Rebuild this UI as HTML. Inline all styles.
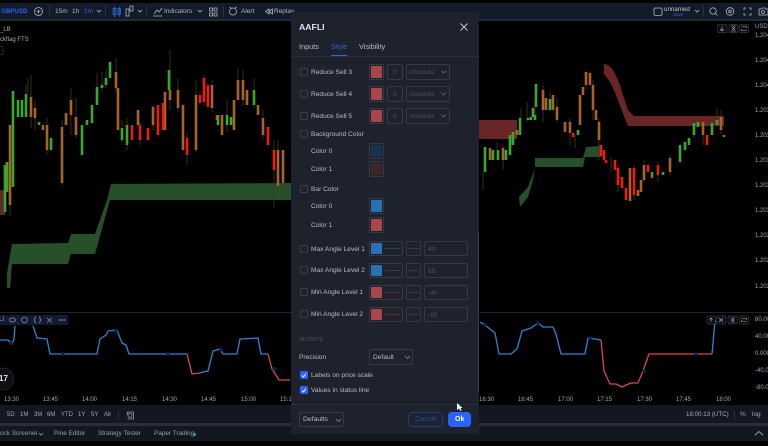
<!DOCTYPE html>
<html><head><meta charset="utf-8"><style>
html,body{margin:0;padding:0;background:#000;width:768px;height:446px;overflow:hidden}
#r{position:relative;width:768px;height:446px;overflow:hidden;background:#000;font-family:"Liberation Sans",sans-serif;color:#d1d4dc;filter:blur(.3px)}
.t{position:absolute;white-space:nowrap;font-size:6.6px;line-height:8px;color:#c3c6ce;transform:translateY(1px)}
.a{position:absolute}
.ax{color:#a3a6af;font-size:6px}
.d{position:absolute;left:291px;top:12px;width:188px;height:422px;background:#1e222d;border-radius:2px}
.l{position:absolute;white-space:nowrap;font-size:6.6px;line-height:8px;color:#b8bbc3;transform:translateY(1px)}
.cb{position:absolute;width:8px;height:8px;box-sizing:border-box;border:1px solid #3a3e49;border-radius:1.5px}
.cb.on{background:#2962ff;border-color:#2962ff}
.b{position:absolute;border:1px solid #363a45;border-radius:2px;box-sizing:border-box}
.s{position:absolute;border-radius:1px}
.dim{color:#4c505b}
.tb{color:#b2b5be;font-size:6.5px}
</style></head><body><div id="r">

<div class="a" style="left:0;top:3px;width:768px;height:16px;background:#131a2a"></div>
<div class="a" style="left:0;top:19px;width:768px;height:2px;background:#262a35"></div>
<div class="a" style="left:0;top:405px;width:768px;height:18px;background:#131722"></div>
<div class="a" style="left:0;top:423px;width:768px;height:3px;background:#2a2e39"></div>
<div class="a" style="left:0;top:426px;width:768px;height:15px;background:#131722"></div>
<div class="a" style="left:0;top:312px;width:768px;height:1px;background:#1e222d"></div>

<svg class="a" style="left:0;top:0" width="768" height="446" viewBox="0 0 768 446" fill="none">
<!-- bands -->
<path d="M7 273L12 244L68 243L71 234L95 234L107 200L111 184L291 183L291 200L110 200L95 254L71 254L68 264L12 264L10 288L7 288Z" fill="#25502a"/>
<path d="M519 197L528 187L535 168L535 158L583 158L586 147L601 146L601 157L585 157L583 167L535 167L533 180L528 197L520 207Z" fill="#25502a"/>
<path d="M479 120L517 120L517 139L479 139Z" fill="#6a2626"/>
<path d="M0 190L5 190L5 215L0 215Z" fill="#5a2a26"/>
<path d="M604 64C612 64 618 78 622 92L628 110L634 116L724 116L724 126L628 126C622 112 616 93 610 82L604 74Z" fill="#6a2626"/>
<!-- wicks -->
<path d="M10 195V216M26 84V117M28 78V94M31 75V128M35 100V130M47 118V155M62 120V185M71 88V135M76 98V138M97 73V105M102 72V92M106 68V88M116 58V92M122 120V142M127 118V150M140 122V145M153 105V130M170 50V110M178 78V112M187 133V165M196 80V152M204 75V106M212 80V112M227 100V132M238 68V100M243 70V105M254 78V108M263 110V140M274 140V208M278 140V190" stroke="#3f3320" stroke-width=".9"/>
<path d="M483 172V190M497 142V160M503 145V170M521 108V120M527 102V122M535 100V120M543 85V122M550 92V112M557 98V122M570 118V145M575 135V148M586 70V90M593 80V120M599 118V160M611 158V172M618 165V192M634 165V200M644 160V182M658 162V182M670 155V175M694 120V138M703 120V145M717 108V125M721 110V135" stroke="#3f3320" stroke-width=".9"/>
<!-- green bodies -->
<path d="M13 91V187M7 162V192M5 165V212M18 100V117M22 100V117M26 94V117M39 122V125M51 138V150M82 125V155M87 120V125M92 105V123M97 87V105M102 85V88M106 78V85M110 62V78M122 128V140M127 125V145M169 70V90M218 115V125M227 115V125M231 117V125M254 90V105" stroke="#39a82c" stroke-width="2.6"/>
<path d="M485 147V172M493 150V160M498 150V160M506 150V160M510 135V155M513 132V145M520 118V135M528 118V120M531 117V120M535 115V120M533 108V117M536 84V107M550 99V110M578 130V135M680 145V162M685 142V150M689 138V145M694 123V135M698 122V127M712 123V135M717 120V125M724 135V137M652 172V176M663 172V175" stroke="#39a82c" stroke-width="2.6"/>
<!-- orange bodies -->
<path d="M10 125V205M31 97V117M35 108V118M43 125V130M47 125V150M62 127V183M66 113V125M71 100V115M76 117V135M116 72V88M118 88V130M138 110V125M153 107V125M165 92V130M170 90V100M178 90V108M183 105V150M196 95V150M212 85V108M217 115V120M222 115V135M234 100V130M238 80V100M243 80V100M247 90V105M258 105V115M263 118V135M278 150V186M283 150V183" stroke="#a8622c" stroke-width="2.6"/>
<path d="M490 148V160M503 148V160M517 130V135M543 90V110M546 98V110M553 95V110M557 107V120M565 122V132M570 122V133M580 95V125M583 87V95M586 72V85M590 73V85M593 85V110M596 110V120M599 122V140M630 168V201M638 190V196M641 180V192M644 165V180M652 175V178M670 158V172M703 122V135M721 117V130" stroke="#a8622c" stroke-width="2.6"/>
<!-- red bodies -->
<path d="M132 125V140M140 125V140M148 128V140M158 105V135M163 103V130M187 138V155M200 95V103M204 78V102M208 85V107M268 127V145M274 150V170" stroke="#ee1c10" stroke-width="2.6"/>
<path d="M573 133V137M601 145V156M604 150V160M606 160V163M615 160V170M618 168V185M622 177V188M626 188V200M634 168V195M648 165V172M658 165V175M707 135V145" stroke="#ee1c10" stroke-width="2.6"/>
<!-- oscillator -->
<g stroke-width="1.3" stroke-linejoin="round">
<path d="M0 340L8 340L12 344L14 339L15 326M33 326L37 338L47 339L50 354L97 354L100 339L106 335L108 331L117 330L122 343L126 345L129 354L187 354" stroke="#2a86d4"/>
<path d="M187 354L192 374L200 373" stroke="#d9474f"/>
<path d="M200 373L203 372L208 371L213 351L220 349L223 354L237 354L240 339L258 338L261 354L268 354" stroke="#2a86d4"/>
<path d="M268 354L272 369L279 380L290 380" stroke="#d9474f"/>
<path d="M480 322L485 325L495 333L499 354L511 354L517 349L522 331L531 328L538 323L543 327L553 327L556 334L561 354L585 354L588 338L601 340" stroke="#2a86d4"/>
<path d="M601 340L604 371L610 384L616 384L622 387L626 385L631 383L638 383L643 371L649 354L712 354" stroke="#d9474f"/>
<path d="M712 354L715 321L718 321" stroke="#2a86d4"/>
</g>
<g fill="#101c4a" stroke="#1c2e6a" stroke-width=".6">
<circle cx="11" cy="343" r="1.5"/><circle cx="63" cy="354" r="1.5"/><circle cx="116" cy="331" r="1.5"/><circle cx="168" cy="354" r="1.5"/><circle cx="221" cy="350" r="1.5"/><circle cx="274" cy="369" r="1.5"/>
<circle cx="485" cy="325" r="1.5"/><circle cx="538" cy="323" r="1.5"/><circle cx="590" cy="338" r="1.5"/><circle cx="644" cy="371" r="1.5"/><circle cx="696" cy="354" r="1.5"/>
</g>
<!-- toolbar icons -->
<g stroke="#b2b5be" stroke-width=".8">
<circle cx="38.500" cy="11.500" r="4"/><path d="M36.500 11.500H40.500M38.500 9.500V13.500"/>
<path d="M49.500 6V17M105.500 6V17M146.500 6V17M223.500 6V17M703.500 6V17" stroke="#363a45"/>
<path d="M97 10L99 12L101 10M138 10L140 12L142 10M198 10L200 12L202 10M695 10L697 12L699 10"/>
<path d="M126 9H129V16H126ZM130 6H133V11H130Z"/>
<path d="M153 16H162M154 14L157 10L159 12L162 8"/>
<path d="M209.500 8h3v3h-3zM214 8h3v3h-3zM209.500 13h3v3h-3zM214 13h3v3h-3z"/>
<circle cx="233" cy="11.500" r="3.500"/><path d="M229.500 8L231 7M235 7L236.500 8"/>
<path d="M269 9L265.500 11.500L269 14ZM272.500 9L269 11.500L272.500 14Z"/>
<rect x="654" y="8" width="8" height="7.500" rx="1.500"/>
<circle cx="713" cy="11" r="3.200"/><path d="M715.500 13.500L717.500 15.500"/>
<circle cx="730" cy="11.500" r="3.800"/><circle cx="730" cy="11.500" r="1.300"/>
<path d="M744 10V8H746M749 8H751V10M751 13V15H749M746 15H744V13"/>
<path d="M759 9H761L762 8H765L766 9H768V15H759Z"/><circle cx="763" cy="12" r="1.500"/>
</g>
<g stroke="#2a6bdc" stroke-width=".8"><path d="M113 8.500H116V14.500H113ZM118 8.500H120.500V14.500H118ZM114.500 6.500V17M119.300 6.500V17" /></g>
<!-- range icon, chevrons -->
<g stroke="#9a9da6" stroke-width=".8">
<path d="M126 414H127.500V412H133.500V419H127.500" /><circle cx="130" cy="415.500" r="2"/>
<path d="M118.500 411V420M734.500 411V420" stroke="#363a45"/>
<path d="M39 433L41 435L43 433"/>
<path d="M755 435L759 431.500L763 435" stroke-width="1"/>
</g>
<!-- small buttons -->
<g stroke="#363a45" stroke-width=".7" fill="#0b0d13">
<rect x="717.500" y="24.500" width="9.500" height="8" rx="1.500"/><rect x="729" y="24.500" width="9" height="8" rx="1.500"/><rect x="739.500" y="24.500" width="9" height="8" rx="1.500"/>
<rect x="707" y="316" width="8" height="8" rx="1.500"/><rect x="716.500" y="316" width="9" height="8" rx="1.500"/><rect x="728" y="316" width="9.500" height="8" rx="1.500"/><rect x="739.500" y="316" width="9" height="8" rx="1.500"/>
</g>
<g stroke="#b2b5be" stroke-width=".6">
<path d="M722 26V31M720 29L722 31L724 29M731 26H736M731 31H736M732 27L733.500 28.500L735 27M732 30L733.500 28.500L735 30M741.500 26.500H746.500V28M746.500 30.500H741.500V29"/>
<path d="M711 318V322M709.500 319.500L711 318L712.500 319.500M719 318L723 322M723 318L719 322M730.500 318H735M730.500 322H735M731.500 319L732.800 320L734 319M731.500 321L732.800 320L734 321M741.500 318.500H746.500V320M746.500 321.500H741.500V320"/>
</g>
<!-- osc toolbar + logo -->
<rect x="-2" y="315" width="70" height="10" rx="2" fill="#111a33"/>
<g stroke="#9a9da6" stroke-width=".7">
<ellipse cx="12.500" cy="320" rx="3" ry="2"/><circle cx="24.500" cy="320" r="2.800"/>
<path d="M36 317Q34.500 317 35 319L34 320L35 321Q34.500 323 36 323M39 317Q40.500 317 40 319L41 320L40 321Q40.500 323 39 323M47 318L52 322.500M52 318L47 322.500"/>
<path d="M59 320H65" stroke-dasharray="1.500 .8" stroke-width="1.300"/>
</g>
<circle cx="3" cy="379" r="11" fill="#0f1014" stroke="#26282e" stroke-width=".7"/>
<rect x="-3" y="46.500" width="6" height="8" rx="1" stroke="#363a45" stroke-width=".7"/>
</svg>

<div class="t" style="left:1px;top:7px;color:#2a62e0;font-weight:bold;font-size:6.2px">GBPUSD</div>
<div class="t tb" style="left:55px;top:7px">15m</div>
<div class="t tb" style="left:72px;top:7px">1h</div>
<div class="t tb" style="left:84px;top:7px;color:#2a62e0">1m</div>
<div class="t tb" style="left:164px;top:7px">Indicators</div>
<div class="t tb" style="left:241px;top:7px">Alert</div>
<div class="t tb" style="left:274px;top:7px">Replay</div>
<div class="t" style="left:664px;top:5px;color:#c3c6ce;font-size:6.200px">unnamed</div>
<div class="t" style="left:673px;top:10px;color:#2a62e0;font-size:4.500px">Save</div>

<div class="t" style="left:0;top:25px;font-size:6px;color:#a9acb5">_LB</div>
<div class="t" style="left:0;top:35px;font-size:6px;color:#a9acb5">ckflag FTS</div>

<div class="t ax" style="left:755px;top:22px">USD ▾</div>
<div class="t ax" style="left:755px;top:31px">1.204</div>
<div class="t ax" style="left:755px;top:56px">1.204</div>
<div class="t ax" style="left:755px;top:81px">1.204</div>
<div class="t ax" style="left:755px;top:106px">1.203</div>
<div class="t ax" style="left:755px;top:131px">1.203</div>
<div class="t ax" style="left:755px;top:156px">1.203</div>
<div class="t ax" style="left:755px;top:181px">1.203</div>
<div class="t ax" style="left:755px;top:206px">1.203</div>
<div class="t ax" style="left:755px;top:231px">1.202</div>
<div class="t ax" style="left:755px;top:256px">1.202</div>
<div class="t ax" style="left:755px;top:282px">1.202</div>
<div class="t ax" style="left:755px;top:315px">80.00</div>
<div class="t ax" style="left:755px;top:332px">40.00</div>
<div class="t ax" style="left:755px;top:349px">0.000</div>
<div class="t ax" style="left:755px;top:366px">-40.0</div>
<div class="t ax" style="left:755px;top:383px">-80.0</div>

<div class="t ax" style="left:4px;top:395px">13:30</div>
<div class="t ax" style="left:43px;top:395px">13:45</div>
<div class="t ax" style="left:82px;top:395px">14:00</div>
<div class="t ax" style="left:122px;top:395px">14:15</div>
<div class="t ax" style="left:162px;top:395px">14:30</div>
<div class="t ax" style="left:201px;top:395px">14:45</div>
<div class="t ax" style="left:241px;top:395px">15:00</div>
<div class="t ax" style="left:280px;top:395px">15:15</div>
<div class="t ax" style="left:479px;top:395px">16:30</div>
<div class="t ax" style="left:518px;top:395px">16:45</div>
<div class="t ax" style="left:558px;top:395px">17:00</div>
<div class="t ax" style="left:597px;top:395px">17:15</div>
<div class="t ax" style="left:637px;top:395px">17:30</div>
<div class="t ax" style="left:676px;top:395px">17:45</div>
<div class="t ax" style="left:716px;top:395px">18:00</div>

<div class="t" style="left:-1px;top:315px;font-size:6px;color:#a9acb5">LI</div>
<div class="t" style="left:-1px;top:374px;font-weight:bold;font-size:8px;color:#e4e5e8">17</div>

<div class="t ax" style="left:7px;top:410px">5D</div>
<div class="t ax" style="left:20px;top:410px">1M</div>
<div class="t ax" style="left:34px;top:410px">3M</div>
<div class="t ax" style="left:47px;top:410px">6M</div>
<div class="t ax" style="left:61px;top:410px">YTD</div>
<div class="t ax" style="left:78px;top:410px">1Y</div>
<div class="t ax" style="left:91px;top:410px">5Y</div>
<div class="t ax" style="left:104px;top:410px">All</div>
<div class="t ax" style="left:686px;top:410px;font-size:6.2px;color:#a9acb5">18:00:13 (UTC)</div>
<div class="t ax" style="left:740px;top:410px;font-size:6.5px">%</div>
<div class="t ax" style="left:752px;top:410px;font-size:6.5px;color:#a9acb5">log</div>

<div class="t" style="left:0;top:429px;color:#9a9da6;font-size:6.4px">ock Screener</div>
<div class="t" style="left:54px;top:429px;color:#9a9da6;font-size:6.4px">Pine Editor</div>
<div class="t" style="left:98px;top:429px;color:#9a9da6;font-size:6.4px">Strategy Tester</div>
<div class="t" style="left:154px;top:429px;color:#9a9da6;font-size:6.4px">Paper Trading</div>
<div class="a" style="left:193px;top:433px;width:2.500px;height:2.500px;border-radius:50%;background:#22ab5a"></div>

<!-- dialog -->
<div class="d"></div>
<div class="t" style="left:299px;top:21px;font-weight:bold;font-size:8.700px;line-height:10px;color:#e0e3eb">AAFLI</div>
<svg class="a" style="left:460px;top:23px" width="8" height="8" fill="none"><path d="M.5 .5L7.500 7.500M7.500 .5L.5 7.500" stroke="#c3c6ce"/></svg>
<div class="l" style="left:299px;top:42px;font-size:7.300px">Inputs</div>
<div class="l" style="left:331px;top:42px;font-size:7.300px;color:#2f5fd0">Style</div>
<div class="l" style="left:359px;top:42px;font-size:7.300px">Visibility</div>
<div class="a" style="left:331px;top:55px;width:16px;height:1px;background:#2962ff"></div>
<div class="a" style="left:291px;top:56px;width:188px;height:1px;background:#2a2e39"></div>

<!-- Reduce rows -->
<div class="cb" style="left:300px;top:68px"></div><div class="l" style="left:311px;top:68px">Reduce Sell 3</div>
<div class="b" style="left:369px;top:64px;width:15px;height:16px"></div><div class="s" style="left:371px;top:66px;width:11px;height:12px;background:#a8464b"></div>
<div class="b" style="left:387px;top:64px;width:16px;height:16px"></div><div class="l dim" style="left:393px;top:68px">0</div>
<div class="b" style="left:406px;top:64px;width:44px;height:16px"></div><div class="l dim" style="left:409px;top:68px">Absolute</div>

<div class="cb" style="left:300px;top:90px"></div><div class="l" style="left:311px;top:90px">Reduce Sell 4</div>
<div class="b" style="left:369px;top:86px;width:15px;height:16px"></div><div class="s" style="left:371px;top:88px;width:11px;height:12px;background:#a8464b"></div>
<div class="b" style="left:387px;top:86px;width:16px;height:16px"></div><div class="l dim" style="left:393px;top:90px">0</div>
<div class="b" style="left:406px;top:86px;width:44px;height:16px"></div><div class="l dim" style="left:409px;top:90px">Absolute</div>

<div class="cb" style="left:300px;top:112px"></div><div class="l" style="left:311px;top:112px">Reduce Sell 5</div>
<div class="b" style="left:369px;top:108px;width:15px;height:16px"></div><div class="s" style="left:371px;top:110px;width:11px;height:12px;background:#a8464b"></div>
<div class="b" style="left:387px;top:108px;width:16px;height:16px"></div><div class="l dim" style="left:393px;top:112px">0</div>
<div class="b" style="left:406px;top:108px;width:44px;height:16px"></div><div class="l dim" style="left:409px;top:112px">Absolute</div>
<svg class="a" style="left:440px;top:70px" width="8" height="50" fill="none" stroke="#6a6d78" stroke-width=".8"><path d="M1 .5L3.500 3L6 .5M1 22.500L3.500 25L6 22.500M1 44.500L3.500 47L6 44.500"/></svg>

<div class="cb" style="left:300px;top:130px"></div><div class="l" style="left:311px;top:130px">Background Color</div>
<div class="l" style="left:311px;top:147px">Color 0</div>
<div class="b" style="left:369px;top:143px;width:15px;height:16px"></div><div class="s" style="left:371px;top:145px;width:11px;height:12px;background:#1b3150"></div>
<div class="l" style="left:311px;top:165px">Color 1</div>
<div class="b" style="left:369px;top:161px;width:15px;height:16px"></div><div class="s" style="left:371px;top:163px;width:11px;height:12px;background:#3d2529"></div>

<div class="cb" style="left:300px;top:185px"></div><div class="l" style="left:311px;top:185px">Bar Color</div>
<div class="l" style="left:311px;top:202px">Color 0</div>
<div class="b" style="left:369px;top:198px;width:15px;height:16px"></div><div class="s" style="left:371px;top:200px;width:11px;height:12px;background:#2a70b4"></div>
<div class="l" style="left:311px;top:221px">Color 1</div>
<div class="b" style="left:369px;top:217px;width:15px;height:16px"></div><div class="s" style="left:371px;top:219px;width:11px;height:12px;background:#a8464b"></div>

<!-- Angle rows -->
<div class="cb" style="left:300px;top:245px"></div><div class="l" style="left:311px;top:245px">Max Angle Level 1</div>
<div class="b" style="left:369px;top:241px;width:34px;height:15px"></div><div class="s" style="left:371px;top:243px;width:11px;height:11px;background:#2a70b4"></div><div class="a" style="left:385px;top:248px;width:15px;height:1px;background:#1f4568"></div>
<div class="b" style="left:406px;top:241px;width:15px;height:15px"></div><div class="a" style="left:408px;top:248px;width:11px;border-top:1px dotted #4c505b"></div>
<div class="b" style="left:424px;top:241px;width:44px;height:15px"></div><div class="l dim" style="left:428px;top:245px">40</div>

<div class="cb" style="left:300px;top:266px"></div><div class="l" style="left:311px;top:266px">Max Angle Level 2</div>
<div class="b" style="left:369px;top:263px;width:34px;height:15px"></div><div class="s" style="left:371px;top:265px;width:11px;height:11px;background:#2a70b4"></div><div class="a" style="left:385px;top:270px;width:15px;height:1px;background:#1f4568"></div>
<div class="b" style="left:406px;top:263px;width:15px;height:15px"></div><div class="a" style="left:408px;top:270px;width:11px;border-top:1px dotted #4c505b"></div>
<div class="b" style="left:424px;top:263px;width:44px;height:15px"></div><div class="l dim" style="left:428px;top:267px">65</div>

<div class="cb" style="left:300px;top:288px"></div><div class="l" style="left:311px;top:288px">Min Angle Level 1</div>
<div class="b" style="left:369px;top:285px;width:34px;height:15px"></div><div class="s" style="left:371px;top:287px;width:11px;height:11px;background:#a8464b"></div><div class="a" style="left:385px;top:292px;width:15px;height:1px;background:#5a2c32"></div>
<div class="b" style="left:406px;top:285px;width:15px;height:15px"></div><div class="a" style="left:408px;top:292px;width:11px;border-top:1px dotted #4c505b"></div>
<div class="b" style="left:424px;top:285px;width:44px;height:15px"></div><div class="l dim" style="left:428px;top:289px">-40</div>

<div class="cb" style="left:300px;top:310px"></div><div class="l" style="left:311px;top:310px">Min Angle Level 2</div>
<div class="b" style="left:369px;top:307px;width:34px;height:15px"></div><div class="s" style="left:371px;top:309px;width:11px;height:11px;background:#a8464b"></div><div class="a" style="left:385px;top:314px;width:15px;height:1px;background:#5a2c32"></div>
<div class="b" style="left:406px;top:307px;width:15px;height:15px"></div><div class="a" style="left:408px;top:314px;width:11px;border-top:1px dotted #4c505b"></div>
<div class="b" style="left:424px;top:307px;width:44px;height:15px"></div><div class="l dim" style="left:428px;top:311px">-65</div>

<div class="l" style="left:299px;top:335px;font-size:5px;color:#555964">OUTPUTS</div>
<div class="l" style="left:299px;top:353px">Precision</div>
<div class="b" style="left:369px;top:349px;width:44px;height:16px"></div><div class="l" style="left:373px;top:353px">Default</div>
<svg class="a" style="left:404px;top:355px" width="7" height="5" fill="none" stroke="#8a8d96" stroke-width=".8"><path d="M1 1L3.500 3.500L6 1"/></svg>

<div class="cb on" style="left:300px;top:371px"></div><div class="l" style="left:311px;top:371px">Labels on price scale</div>
<div class="cb on" style="left:300px;top:386px"></div><div class="l" style="left:311px;top:386px">Values in status line</div>
<svg class="a" style="left:300px;top:371px" width="9" height="24" fill="none" stroke="#fff" stroke-width=".9"><path d="M2 4.500L3.500 6L6 2.500M2 19.500L3.500 21L6 17.500"/></svg>

<div class="a" style="left:478px;top:232px;width:1px;height:160px;background:#3a3e49"></div>
<div class="a" style="left:291px;top:404px;width:188px;height:1px;background:#2a2e39"></div>

<div class="b" style="left:299px;top:412px;width:45px;height:15px"></div><div class="l" style="left:303px;top:415px;font-size:6.800px">Defaults</div>
<svg class="a" style="left:335px;top:418px" width="7" height="5" fill="none" stroke="#8a8d96" stroke-width=".8"><path d="M1 1L3.500 3.500L6 1"/></svg>
<div class="a" style="left:408px;top:412px;width:35px;height:15px;box-sizing:border-box;border:1px solid #1d3a82;border-radius:4px"></div><div class="l" style="left:415px;top:415px;color:#2a4a9c;font-size:7px">Cancel</div>
<div class="a" style="left:448px;top:412px;width:23px;height:15px;background:#2962ff;border-radius:4px"></div><div class="l" style="left:455px;top:415px;color:#fff;font-weight:bold;font-size:7px">Ok</div>
<svg class="a" style="left:456px;top:402px" width="8" height="10"><path d="M1 1V8L3 6.500L4.500 9L5.500 8.500L4.500 6H6.500Z" fill="#fff"/></svg>

</div></body></html>
